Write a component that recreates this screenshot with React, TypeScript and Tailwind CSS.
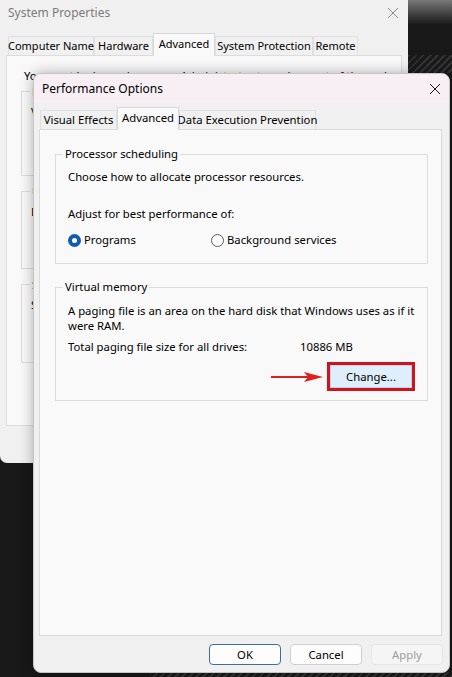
import type { ReactNode } from "react";

/* Two stacked Windows 11 dialogs: System Properties behind, Performance Options on top. */

function CloseIcon({ className }: { className: string }) {
  return (
    <svg viewBox="0 0 12 12" className={className} aria-hidden>
      <path d="M1 1L11 11M11 1L1 11" stroke="currentColor" strokeWidth="1" fill="none" />
    </svg>
  );
}

function Tab({ label, w, active }: { label: string; w: string; active?: boolean }) {
  return active ? (
    <div
      className={`relative z-10 -mb-px flex h-[23px] items-start justify-center whitespace-nowrap border border-b-0 border-[#d9d9d9] bg-[#f9f9f9] pt-[2px] leading-[16px] ${w}`}
    >
      {label}
    </div>
  ) : (
    <div
      className={`flex h-[19px] items-center justify-center whitespace-nowrap border border-b-0 border-[#e0e0e0] bg-[#f0f0f0] leading-[16px] ${w}`}
    >
      {label}
    </div>
  );
}

function Group({ title, children, className }: { title: string; children: ReactNode; className: string }) {
  return (
    <fieldset className={`border border-[#dcdcdc] px-[12px] ${className}`}>
      <legend className="ml-[-5px] px-[2px] leading-[16px]">{title}</legend>
      {children}
    </fieldset>
  );
}

function Radio({ checked, label, className }: { checked?: boolean; label: string; className?: string }) {
  return (
    <div className={`flex h-[16px] items-center gap-[3px] ${className ?? ""}`}>
      {checked ? (
        <span className="flex h-[13px] w-[13px] items-center justify-center rounded-full bg-[#0f5eab]">
          <span className="h-[5px] w-[5px] rounded-full bg-white" />
        </span>
      ) : (
        <span className="h-[13px] w-[13px] rounded-full border border-[#5c5c5c] bg-[#fbfbfb]" />
      )}
      <span>{label}</span>
    </div>
  );
}

function SystemProperties() {
  return (
    <div className="absolute left-0 top-0 flex h-[463px] w-[408px] flex-col rounded-b-[7px] bg-[#f0f0f0]">
      <div className="flex h-[25px] items-center justify-between pl-[8px] pr-[9px] text-[#7b7b7b]">
        <span className="text-[12px]">System Properties</span>
        <CloseIcon className="h-[12px] w-[12px] text-[#8a8a8a]" />
      </div>
      <div className="flex h-[30px] items-end pl-[8px] text-[11px]">
        <Tab label="Computer Name" w="w-[86px]" />
        <Tab label="Hardware" w="w-[59px]" />
        <Tab label="Advanced" w="w-[62px]" active />
        <Tab label="System Protection" w="w-[98px]" />
        <Tab label="Remote" w="w-[45px]" />
      </div>
      <div className="mx-[6px] flex h-[371px] flex-col whitespace-nowrap border border-[#dcdcdc] bg-[#f9f9f9] pl-[14px] pt-[12px] leading-[16px]">
        <p className="pl-[3px]">You must be logged on as an Administrator to make most of these changes.</p>
        <div className="mt-[7px] h-[85px] w-[360px] border border-[#dcdcdc] pl-[8px]">
          <p className="-mt-[8px] w-fit bg-[#f9f9f9] px-[2px]">Performance</p>
          <p className="mt-[4px] pl-[1px]">Visual effects, processor scheduling, memory usage, and virtual memory</p>
        </div>
        <div className="mt-[15px] h-[78px] w-[360px] border border-[#dcdcdc] pl-[8px]">
          <p className="-mt-[8px] w-fit bg-[#f9f9f9] px-[2px]">User Profiles</p>
          <p className="mt-[4px] pl-[1px]">Desktop settings related to your sign-in</p>
        </div>
        <div className="mt-[15px] h-[79px] w-[360px] border border-[#dcdcdc] pl-[8px]">
          <p className="-mt-[8px] w-fit bg-[#f9f9f9] px-[2px]">Startup and Recovery</p>
          <p className="mt-[4px] pl-[1px]">System startup, system failure, and debugging information</p>
        </div>
      </div>
    </div>
  );
}

function PerformanceOptions() {
  return (
    <div className="absolute left-[33px] top-[73px] flex h-[600px] w-[417px] flex-col overflow-hidden rounded-[8px] border border-[#c4c4c4] bg-[#f0f0f0] shadow-[0_0_14px_rgba(0,0,0,0.3)]">
      <div className="flex h-[29px] shrink-0 items-center justify-between bg-[#f8eff5] pl-[8px] pr-[8px]">
        <span className="pt-[1px] text-[12px]">Performance Options</span>
        <CloseIcon className="h-[12px] w-[12px] text-[#1a1a1a]" />
      </div>
      <div className="flex h-[26px] shrink-0 items-end pl-[6px]">
        <Tab label="Visual Effects" w="w-[77px]" />
        <Tab label="Advanced" w="w-[62px]" active />
        <Tab label="Data Execution Prevention" w="w-[137px]" />
      </div>
      <div className="ml-[5px] h-[507px] w-[403px] shrink-0 border border-[#dadada] bg-[#f9f9f9] pl-[15px] pr-[13px] pt-[16px]">
        <Group title="Processor scheduling" className="pb-[15px]">
          <p className="mt-[7px] leading-[16px]">Choose how to allocate processor resources.</p>
          <p className="mt-[21px] leading-[16px]">Adjust for best performance of:</p>
          <div className="mt-[10px] flex">
            <Radio checked label="Programs" className="w-[143px]" />
            <Radio label="Background services" />
          </div>
        </Group>
        <Group title="Virtual memory" className="mt-[15px] pb-[9px]">
          <p className="mt-[8px] leading-[15px]">
            A paging file is an area on the hard disk that Windows uses as if it were RAM.
          </p>
          <div className="mt-[6px] flex leading-[16px]">
            <span className="w-[232px]">Total paging file size for all drives:</span>
            <span>10886 MB</span>
          </div>
          <div className="mt-[7px] flex items-center">
            <svg viewBox="0 0 52 12" className="ml-[203px] h-[12px] w-[52px] shrink-0" aria-hidden>
              <path d="M0 6H38" stroke="#e0201f" strokeWidth="2.2" />
              <path d="M33 1L52 6L33 11L37 6Z" fill="#e0201f" />
            </svg>
            <div className="ml-[4px] h-[29px] w-[88px] shrink-0 border-[3px] border-[#d0121c] bg-[#dfeefb]">
              <div className="flex h-full items-center justify-center border border-[#b8d4ee] leading-[16px]">
                Change...
              </div>
            </div>
          </div>
        </Group>
      </div>
      <div className="flex justify-end gap-[9px] pr-[6px] pt-[8px]">
        <button className="h-[21px] w-[72px] rounded-[4px] border border-[#3f6f99] bg-[#fdfdfd] leading-[16px]">OK</button>
        <button className="h-[21px] w-[72px] rounded-[4px] border border-[#d0d0d0] bg-[#fdfdfd] leading-[16px]">Cancel</button>
        <button className="h-[21px] w-[72px] rounded-[4px] border border-[#e6e6e6] bg-[#f5f5f5] leading-[16px] text-[#9d9d9d]">
          Apply
        </button>
      </div>
    </div>
  );
}

export default function App() {
  return (
    <div className="relative h-[677px] w-[452px] overflow-hidden bg-[#181818] font-['Segoe_UI','Noto_Sans',sans-serif] text-[11.3px] text-black">
      <div className="absolute right-0 top-0 h-[24px] w-[44px] bg-gradient-to-b from-[#7a7a7a] to-[#1c1c1c]" />
      <div className="absolute right-0 top-[55px] h-[18px] w-[44px] bg-[repeating-linear-gradient(135deg,#333333_0px,#333333_2px,#1a1a1a_2px,#1a1a1a_5px)]" />
      <div className="absolute bottom-0 left-[150px] h-[5px] w-[302px] bg-[repeating-linear-gradient(135deg,#333333_0px,#333333_2px,#1a1a1a_2px,#1a1a1a_5px)]" />
      <SystemProperties />
      <PerformanceOptions />
    </div>
  );
}
